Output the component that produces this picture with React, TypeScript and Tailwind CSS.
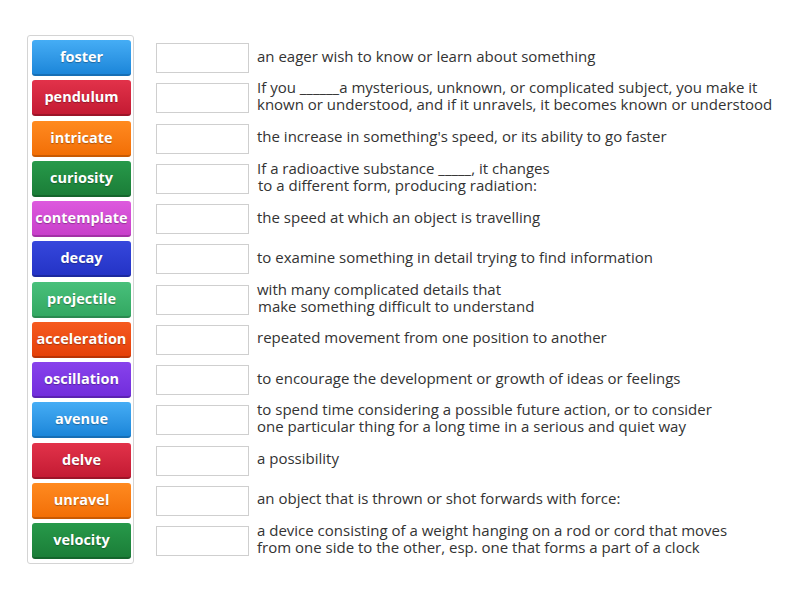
const words: { label: string; bg: string }[] = [
  { label: "foster", bg: "bg-gradient-to-b from-[#45adf5] to-[#1b86d9] border-[#176fb5]" },
  { label: "pendulum", bg: "bg-gradient-to-b from-[#e2324a] to-[#c41a33] border-[#9c1428]" },
  { label: "intricate", bg: "bg-gradient-to-b from-[#ff8a1f] to-[#f26f05] border-[#c85a03]" },
  { label: "curiosity", bg: "bg-gradient-to-b from-[#27994a] to-[#1b7e38] border-[#14652c]" },
  { label: "contemplate", bg: "bg-gradient-to-b from-[#dd5ade] to-[#c83fca] border-[#a331a5]" },
  { label: "decay", bg: "bg-gradient-to-b from-[#3647dc] to-[#2433c6] border-[#1c289e]" },
  { label: "projectile", bg: "bg-gradient-to-b from-[#48c07b] to-[#33a862] border-[#2a8a50]" },
  { label: "acceleration", bg: "bg-gradient-to-b from-[#f65a1f] to-[#e54008] border-[#b93306]" },
  { label: "oscillation", bg: "bg-gradient-to-b from-[#8842ec] to-[#722ddc] border-[#5b22b2]" },
  { label: "avenue", bg: "bg-gradient-to-b from-[#45adf5] to-[#1b86d9] border-[#176fb5]" },
  { label: "delve", bg: "bg-gradient-to-b from-[#e2324a] to-[#c41a33] border-[#9c1428]" },
  { label: "unravel", bg: "bg-gradient-to-b from-[#ff8a1f] to-[#f26f05] border-[#c85a03]" },
  { label: "velocity", bg: "bg-gradient-to-b from-[#27994a] to-[#1b7e38] border-[#14652c]" },
];

// second lines of a few definitions sit a hair to the right
const definitions: { text: string; nudge?: boolean }[] = [
  { text: "an eager wish to know or learn about something" },
  { text: "If you ______a mysterious, unknown, or complicated subject, you make it\nknown or understood, and if it unravels, it becomes known or understood" },
  { text: "the increase in something's speed, or its ability to go faster" },
  { text: "If a radioactive substance _____, it changes\nto a different form, producing radiation:", nudge: true },
  { text: "the speed at which an object is travelling" },
  { text: "to examine something in detail trying to find information" },
  { text: "with many complicated details that\nmake something difficult to understand", nudge: true },
  { text: "repeated movement from one position to another" },
  { text: "to encourage the development or growth of ideas or feelings" },
  { text: "to spend time considering a possible future action, or to consider\none particular thing for a long time in a serious and quiet way" },
  { text: "a possibility" },
  { text: "an object that is thrown or shot forwards with force:" },
  { text: "a device consisting of a weight hanging on a rod or cord that moves\nfrom one side to the other, esp. one that forms a part of a clock" },
];

export default function App() {
  return (
    <div
      className="flex h-[600px] w-[800px] gap-[22px] bg-white pl-[27px] pt-[35px]"
      style={{ fontFamily: '"Open Sans", "Noto Sans", sans-serif' }}
    >
      <div className="flex h-[529px] w-[107px] flex-col gap-[4.25px] rounded-[3px] border border-[#d4d4d4] pl-[4px] pt-[4px]">
        {words.map((w) => (
          <div
            key={w.label}
            className={`flex h-[36px] w-[99px] items-center justify-center rounded-[3px] border-b-2 text-[14.5px] font-bold text-white [text-shadow:0_1px_1px_rgba(0,0,0,0.3)] ${w.bg}`}
          >
            {w.label}
          </div>
        ))}
      </div>
      <div className="flex flex-col gap-[10.25px] pt-[8px]">
        {definitions.map((d, i) => {
          const [first, second] = d.text.split("\n");
          return (
            <div key={i} className="flex h-[30px] items-center gap-[8px]">
              <div className="h-[30px] w-[93px] shrink-0 border border-[#cfcfcf] bg-white" />
              <div className="whitespace-pre pb-[4px] text-[15px] leading-[17px] text-[#333333]">
                <p>{first}</p>
                {second && <p className={d.nudge ? "pl-[1px]" : ""}>{second}</p>}
              </div>
            </div>
          );
        })}
      </div>
    </div>
  );
}
